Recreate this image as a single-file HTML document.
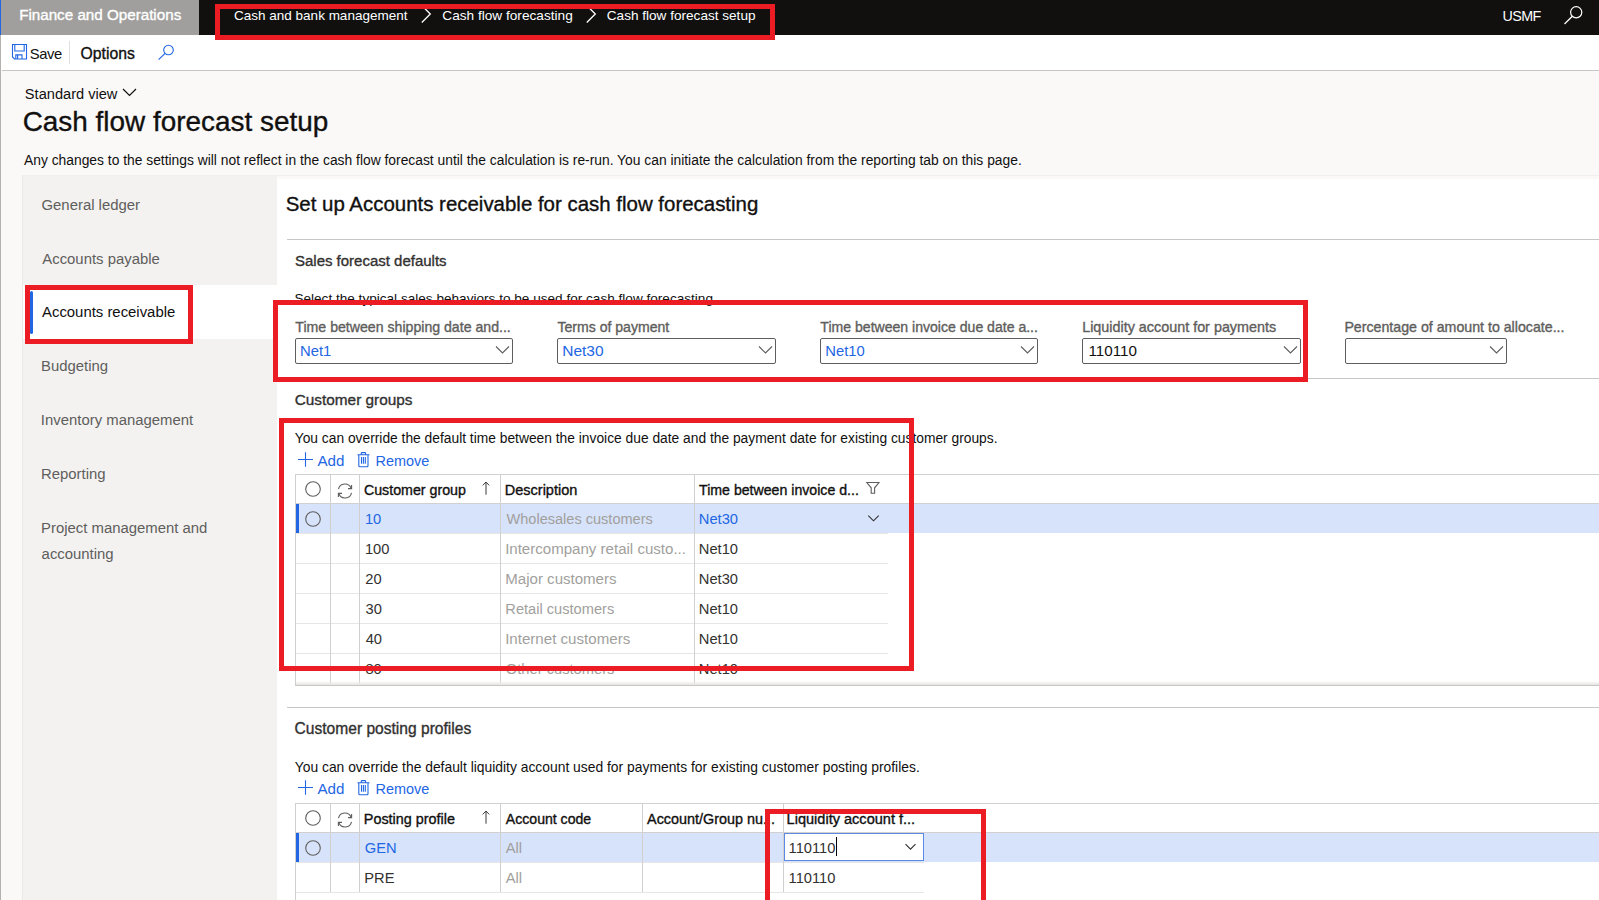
<!DOCTYPE html>
<html><head><meta charset="utf-8">
<style>
*{margin:0;padding:0;box-sizing:border-box}
html,body{width:1599px;height:900px;overflow:hidden;background:#faf9f8;font-family:"Liberation Sans",sans-serif;color:#323130}
.a{position:absolute;white-space:nowrap;line-height:1;display:block}
</style></head><body>
<div class="a" style="left:0px;top:0px;width:1599px;height:35px;background:#11100f"></div>
<div class="a" style="left:0px;top:0px;width:199px;height:35px;background:#a19f9d"></div>
<div class="a" style="left:0px;top:0px;width:1px;height:35px;background:#2266e3"></div>
<div class="a" style="left:19.13px;top:7px;font-size:15.2px;color:#ffffff;-webkit-text-stroke:0.35px #ffffff">Finance and Operations</div>
<div class="a" style="left:234.07px;top:9px;font-size:13.51px;color:#ffffff">Cash and bank management</div>
<div class="a" style="left:442.32px;top:9px;font-size:13.65px;color:#ffffff">Cash flow forecasting</div>
<div class="a" style="left:606.82px;top:9px;font-size:13.58px;color:#ffffff">Cash flow forecast setup</div>
<svg class="a" style="left:416px;top:0px" width="20" height="30" viewBox="0 0 20 30"><path d="M5.8 5.5 L14.3 14 L5.8 22.5" fill="none" stroke="#fff" stroke-width="1.3"/></svg>
<svg class="a" style="left:581px;top:0px" width="20" height="30" viewBox="0 0 20 30"><path d="M5.8 5.5 L14.3 14 L5.8 22.5" fill="none" stroke="#fff" stroke-width="1.3"/></svg>
<div class="a" style="left:1502.53px;top:9px;font-size:14.3px;color:#ffffff;letter-spacing:-0.6px">USMF</div>
<svg class="a" style="left:1560px;top:4px" width="30" height="24" viewBox="0 0 30 24"><circle cx="16.2" cy="8.3" r="5.6" fill="none" stroke="#fff" stroke-width="1.2"/><path d="M12.3 12.3 L4.5 20" stroke="#fff" stroke-width="1.3"/></svg>
<div class="a" style="left:1px;top:35px;width:1598px;height:35px;background:#ffffff"></div>
<div class="a" style="left:2px;top:70px;width:1597px;height:1px;background:#c8c6c4"></div>
<div class="a" style="left:0px;top:35px;width:1px;height:865px;background:#b3b0ad"></div>
<svg class="a" style="left:11px;top:43px" width="18" height="18" viewBox="0 0 18 18"><path d="M1.5 1.5 H15.5 V16 H3.5 L1.5 14 Z M3.8 1.5 V8 H13.2 V1.5 M4.8 16 V11.9 H11 V16 M6.6 12.5 V16" fill="none" stroke="#2266e3" stroke-width="1.1"/></svg>
<div class="a" style="left:29.73px;top:47px;font-size:14.8px;color:#11100f;letter-spacing:-0.4px">Save</div>
<div class="a" style="left:69px;top:41px;width:1px;height:23px;background:#e1dfdd"></div>
<div class="a" style="left:80.54px;top:46px;font-size:15.78px;color:#11100f;-webkit-text-stroke:0.35px #11100f">Options</div>
<svg class="a" style="left:157px;top:43px" width="20" height="18" viewBox="0 0 20 18"><circle cx="11.5" cy="7" r="4.8" fill="none" stroke="#2266e3" stroke-width="1.1"/><path d="M8.1 10.4 L1.6 16.6" stroke="#2266e3" stroke-width="1.2"/></svg>
<div class="a" style="left:1px;top:71px;width:1598px;height:829px;background:#faf9f8"></div>
<div class="a" style="left:24.84px;top:87px;font-size:14.61px;color:#11100f">Standard view</div>
<svg class="a" style="left:121px;top:86px" width="18" height="12" viewBox="0 0 18 12"><path d="M2 3 L8.5 9.5 L15 3" fill="none" stroke="#11100f" stroke-width="1.2"/></svg>
<div class="a" style="left:22.70px;top:108px;font-size:27.92px;color:#11100f;-webkit-text-stroke:0.35px #11100f">Cash flow forecast setup</div>
<div class="a" style="left:24.00px;top:154px;font-size:13.84px;color:#11100f">Any changes to the settings will not reflect in the cash flow forecast until the calculation is re-run. You can initiate the calculation from the reporting tab on this page.</div>
<div class="a" style="left:22px;top:175px;width:1px;height:725px;background:#ebe9e7"></div>
<div class="a" style="left:23px;top:175px;width:1576px;height:1px;background:#f1f0ef"></div>
<div class="a" style="left:23px;top:176px;width:254px;height:724px;background:#f3f2f1"></div>
<div class="a" style="left:277px;top:179px;width:1322px;height:721px;background:#ffffff"></div>
<div class="a" style="left:23px;top:285px;width:254px;height:54px;background:#ffffff"></div>
<div class="a" style="left:30px;top:291px;width:3px;height:43px;background:#2266e3;border-radius:1.5px"></div>
<div class="a" style="left:41.51px;top:198px;font-size:14.9px;color:#605e5c">General ledger</div>
<div class="a" style="left:42.25px;top:252px;font-size:14.9px;color:#605e5c">Accounts payable</div>
<div class="a" style="left:42.00px;top:305px;font-size:14.9px;color:#11100f">Accounts receivable</div>
<div class="a" style="left:41.01px;top:359px;font-size:14.9px;color:#605e5c">Budgeting</div>
<div class="a" style="left:40.86px;top:413px;font-size:14.9px;color:#605e5c">Inventory management</div>
<div class="a" style="left:41.01px;top:467px;font-size:14.9px;color:#605e5c">Reporting</div>
<div class="a" style="left:41.01px;top:521px;font-size:14.9px;color:#605e5c">Project management and</div>
<div class="a" style="left:41.60px;top:547px;font-size:14.9px;color:#605e5c">accounting</div>
<div class="a" style="left:285.73px;top:194px;font-size:20.46px;color:#11100f;-webkit-text-stroke:0.35px #11100f">Set up Accounts receivable for cash flow forecasting</div>
<div class="a" style="left:287px;top:239px;width:1312px;height:1px;background:#c8c6c4"></div>
<div class="a" style="left:294.98px;top:253px;font-size:14.99px;color:#323130;-webkit-text-stroke:0.35px #323130">Sales forecast defaults</div>
<div class="a" style="left:294.39px;top:292px;font-size:13.6px;color:#11100f">Select the typical sales behaviors to be used for cash flow forecasting.</div>
<div class="a" style="left:295.37px;top:320px;font-size:14.14px;color:#605e5c;-webkit-text-stroke:0.35px #605e5c">Time between shipping date and...</div>
<div class="a" style="left:557.47px;top:320px;font-size:14.07px;color:#605e5c;-webkit-text-stroke:0.35px #605e5c">Terms of payment</div>
<div class="a" style="left:820.37px;top:320px;font-size:14.07px;color:#605e5c;-webkit-text-stroke:0.35px #605e5c">Time between invoice due date a...</div>
<div class="a" style="left:1082.20px;top:320px;font-size:14.37px;color:#605e5c;-webkit-text-stroke:0.35px #605e5c">Liquidity account for payments</div>
<div class="a" style="left:1344.41px;top:320px;font-size:14.2px;color:#605e5c;-webkit-text-stroke:0.35px #605e5c">Percentage of amount to allocate...</div>
<div class="a" style="left:295px;top:338px;width:218px;height:26px;border:1px solid #605e5c;border-radius:2px;background:#fff"></div>
<svg class="a" style="left:495px;top:345px" width="15" height="10" viewBox="0 0 15 10"><path d="M1 1.5 L7.5 8 L14 1.5" fill="none" stroke="#605e5c" stroke-width="1.1"/></svg>
<div class="a" style="left:557px;top:338px;width:219px;height:26px;border:1px solid #605e5c;border-radius:2px;background:#fff"></div>
<svg class="a" style="left:758px;top:345px" width="15" height="10" viewBox="0 0 15 10"><path d="M1 1.5 L7.5 8 L14 1.5" fill="none" stroke="#605e5c" stroke-width="1.1"/></svg>
<div class="a" style="left:820px;top:338px;width:218px;height:26px;border:1px solid #605e5c;border-radius:2px;background:#fff"></div>
<svg class="a" style="left:1020px;top:345px" width="15" height="10" viewBox="0 0 15 10"><path d="M1 1.5 L7.5 8 L14 1.5" fill="none" stroke="#605e5c" stroke-width="1.1"/></svg>
<div class="a" style="left:1082px;top:338px;width:219px;height:26px;border:1px solid #605e5c;border-radius:2px;background:#fff"></div>
<svg class="a" style="left:1283px;top:345px" width="15" height="10" viewBox="0 0 15 10"><path d="M1 1.5 L7.5 8 L14 1.5" fill="none" stroke="#605e5c" stroke-width="1.1"/></svg>
<div class="a" style="left:1345px;top:338px;width:162px;height:26px;border:1px solid #605e5c;border-radius:2px;background:#fff"></div>
<svg class="a" style="left:1489px;top:345px" width="15" height="10" viewBox="0 0 15 10"><path d="M1 1.5 L7.5 8 L14 1.5" fill="none" stroke="#605e5c" stroke-width="1.1"/></svg>
<div class="a" style="left:300.02px;top:344px;font-size:14.8px;color:#2266e3">Net1</div>
<div class="a" style="left:562.26px;top:343px;font-size:15.49px;color:#2266e3">Net30</div>
<div class="a" style="left:825.22px;top:344px;font-size:14.8px;color:#2266e3">Net10</div>
<div class="a" style="left:1088.46px;top:343px;font-size:15.19px;color:#11100f">110110</div>
<div class="a" style="left:287px;top:378px;width:1312px;height:1px;background:#c8c6c4"></div>
<div class="a" style="left:294.68px;top:392px;font-size:15.36px;color:#323130;-webkit-text-stroke:0.35px #323130">Customer groups</div>
<div class="a" style="left:294.72px;top:432px;font-size:13.81px;color:#11100f">You can override the default time between the invoice due date and the payment date for existing customer groups.</div>
<svg class="a" style="left:297px;top:452px" width="17" height="17" viewBox="0 0 17 17"><path d="M1 7.5 H16 M8.5 0.3 V14.8" stroke="#2266e3" stroke-width="1.1"/></svg>
<div class="a" style="left:317.50px;top:453px;font-size:15.12px;color:#2266e3">Add</div>
<svg class="a" style="left:356px;top:452px" width="15" height="17" viewBox="0 0 15 17"><path d="M1.5 2.8 H13.5 M5.3 2.8 V1.2 Q5.3 0.6 6 0.6 H8.9 Q9.6 0.6 9.6 1.2 V2.8 M2.8 2.8 V13.8 Q2.8 14.8 3.8 14.8 H11 Q12 14.8 12 13.8 V2.8 M5.5 5 V11.8 M7.4 5 V11.8 M9.3 5 V11.8" fill="none" stroke="#2266e3" stroke-width="1.1"/></svg>
<div class="a" style="left:375.44px;top:454px;font-size:14.48px;color:#2266e3">Remove</div>
<div class="a" style="left:295px;top:474px;width:1304px;height:1px;background:#d2d0ce"></div>
<div class="a" style="left:295px;top:503px;width:1304px;height:1px;background:#d2d0ce"></div>
<div class="a" style="left:296px;top:504px;width:1303px;height:29px;background:#d7e3fa"></div>
<div class="a" style="left:296px;top:504px;width:3px;height:29px;background:#2266e3"></div>
<div class="a" style="left:295px;top:533px;width:593px;height:1px;background:#e8e6e4"></div>
<div class="a" style="left:295px;top:563px;width:593px;height:1px;background:#e8e6e4"></div>
<div class="a" style="left:295px;top:593px;width:593px;height:1px;background:#e8e6e4"></div>
<div class="a" style="left:295px;top:623px;width:593px;height:1px;background:#e8e6e4"></div>
<div class="a" style="left:295px;top:653px;width:593px;height:1px;background:#e8e6e4"></div>
<div class="a" style="left:330px;top:474px;width:1px;height:210px;background:#d2d0ce"></div>
<div class="a" style="left:359px;top:474px;width:1px;height:210px;background:#d2d0ce"></div>
<div class="a" style="left:500px;top:474px;width:1px;height:210px;background:#d2d0ce"></div>
<div class="a" style="left:694px;top:474px;width:1px;height:210px;background:#d2d0ce"></div>
<div class="a" style="left:295px;top:474px;width:1px;height:211px;background:#d2d0ce"></div>
<svg class="a" style="left:303px;top:479px" width="20" height="20" viewBox="0 0 20 20"><circle cx="10" cy="10" r="7.3" fill="none" stroke="#605e5c" stroke-width="1.1"/></svg>
<svg class="a" style="left:335px;top:480.5px" width="20" height="20" viewBox="0 0 20 20"><path d="M3.5 8.2 A6.6 6.6 0 0 1 16.1 7.2 M16.5 11.8 A6.6 6.6 0 0 1 3.9 12.8" fill="none" stroke="#605e5c" stroke-width="1.1"/><path d="M16.6 4 V7.6 H13 M3.4 16 V12.4 H7" fill="none" stroke="#605e5c" stroke-width="1.1"/></svg>
<svg class="a" style="left:303px;top:509px" width="20" height="20" viewBox="0 0 20 20"><circle cx="10" cy="10" r="7.3" fill="none" stroke="#605e5c" stroke-width="1.1"/></svg>
<div class="a" style="left:363.94px;top:483px;font-size:14.22px;color:#11100f;-webkit-text-stroke:0.35px #11100f">Customer group</div>
<svg class="a" style="left:479.6px;top:481px" width="12" height="16" viewBox="0 0 12 16"><path d="M6 1 V13.7 M2.8 4.4 L6 1 L9.2 4.4" fill="none" stroke="#3b3a39" stroke-width="1"/></svg>
<div class="a" style="left:504.79px;top:483px;font-size:14.51px;color:#11100f;-webkit-text-stroke:0.35px #11100f">Description</div>
<div class="a" style="left:699.07px;top:483px;font-size:14.15px;color:#11100f;-webkit-text-stroke:0.35px #11100f">Time between invoice d...</div>
<svg class="a" style="left:864px;top:480px" width="17" height="16" viewBox="0 0 17 16"><path d="M2.8 2.5 H15 L10.6 7.8 V13.3 H7.2 V7.8 Z" fill="none" stroke="#605e5c" stroke-width="1.1"/></svg>
<div class="a" style="left:364.90px;top:512px;font-size:14.7px;color:#2266e3">10</div>
<div class="a" style="left:506.50px;top:512px;font-size:14.55px;color:#a19f9d">Wholesales customers</div>
<div class="a" style="left:698.82px;top:512px;font-size:14.7px;color:#2266e3">Net30</div>
<div class="a" style="left:364.90px;top:542px;font-size:14.7px;color:#323130">100</div>
<div class="a" style="left:505.14px;top:541px;font-size:15.07px;color:#a19f9d">Intercompany retail custo...</div>
<div class="a" style="left:698.82px;top:542px;font-size:14.7px;color:#323130">Net10</div>
<div class="a" style="left:365.26px;top:572px;font-size:14.7px;color:#323130">20</div>
<div class="a" style="left:505.30px;top:571px;font-size:15.05px;color:#a19f9d">Major customers</div>
<div class="a" style="left:698.82px;top:572px;font-size:14.7px;color:#323130">Net30</div>
<div class="a" style="left:365.49px;top:602px;font-size:14.7px;color:#323130">30</div>
<div class="a" style="left:505.33px;top:602px;font-size:14.64px;color:#a19f9d">Retail customers</div>
<div class="a" style="left:698.82px;top:602px;font-size:14.7px;color:#323130">Net10</div>
<div class="a" style="left:365.71px;top:632px;font-size:14.7px;color:#323130">40</div>
<div class="a" style="left:505.14px;top:631px;font-size:15.12px;color:#a19f9d">Internet customers</div>
<div class="a" style="left:698.82px;top:632px;font-size:14.7px;color:#323130">Net10</div>
<div class="a" style="left:365.41px;top:662px;font-size:14.7px;color:#323130">80</div>
<div class="a" style="left:505.84px;top:662px;font-size:14.7px;color:#a19f9d">Other customers</div>
<div class="a" style="left:698.82px;top:662px;font-size:14.7px;color:#323130">Net10</div>
<svg class="a" style="left:867px;top:514px" width="14" height="9" viewBox="0 0 14 9"><path d="M1.3 1.6 L6.5 6.8 L11.7 1.6" fill="none" stroke="#323130" stroke-width="1.1"/></svg>
<div class="a" style="left:296px;top:681px;width:1303px;height:4px;background:linear-gradient(rgba(255,255,255,0.2),#e6e4e2)"></div>
<div class="a" style="left:295px;top:685px;width:1304px;height:1px;background:#c8c6c4"></div>
<div class="a" style="left:287px;top:707px;width:1312px;height:1px;background:#c8c6c4"></div>
<div class="a" style="left:294.57px;top:721px;font-size:15.58px;color:#323130;-webkit-text-stroke:0.35px #323130">Customer posting profiles</div>
<div class="a" style="left:294.72px;top:761px;font-size:13.86px;color:#11100f">You can override the default liquidity account used for payments for existing customer posting profiles.</div>
<svg class="a" style="left:297px;top:780px" width="17" height="17" viewBox="0 0 17 17"><path d="M1 7.5 H16 M8.5 0.3 V14.8" stroke="#2266e3" stroke-width="1.1"/></svg>
<div class="a" style="left:317.50px;top:781px;font-size:15.12px;color:#2266e3">Add</div>
<svg class="a" style="left:356px;top:780px" width="15" height="17" viewBox="0 0 15 17"><path d="M1.5 2.8 H13.5 M5.3 2.8 V1.2 Q5.3 0.6 6 0.6 H8.9 Q9.6 0.6 9.6 1.2 V2.8 M2.8 2.8 V13.8 Q2.8 14.8 3.8 14.8 H11 Q12 14.8 12 13.8 V2.8 M5.5 5 V11.8 M7.4 5 V11.8 M9.3 5 V11.8" fill="none" stroke="#2266e3" stroke-width="1.1"/></svg>
<div class="a" style="left:375.44px;top:782px;font-size:14.48px;color:#2266e3">Remove</div>
<div class="a" style="left:295px;top:803px;width:1304px;height:1px;background:#d2d0ce"></div>
<div class="a" style="left:295px;top:832px;width:1304px;height:1px;background:#d2d0ce"></div>
<div class="a" style="left:296px;top:833px;width:1303px;height:29px;background:#d7e3fa"></div>
<div class="a" style="left:296px;top:833px;width:3px;height:29px;background:#2266e3"></div>
<div class="a" style="left:295px;top:862px;width:629px;height:1px;background:#e8e6e4"></div>
<div class="a" style="left:295px;top:892px;width:629px;height:1px;background:#e8e6e4"></div>
<div class="a" style="left:295px;top:803px;width:1px;height:97px;background:#d2d0ce"></div>
<div class="a" style="left:330px;top:803px;width:1px;height:89px;background:#d2d0ce"></div>
<div class="a" style="left:359px;top:803px;width:1px;height:89px;background:#d2d0ce"></div>
<div class="a" style="left:500px;top:803px;width:1px;height:89px;background:#d2d0ce"></div>
<div class="a" style="left:642px;top:803px;width:1px;height:89px;background:#d2d0ce"></div>
<div class="a" style="left:783px;top:803px;width:1px;height:89px;background:#d2d0ce"></div>
<svg class="a" style="left:303px;top:808px" width="20" height="20" viewBox="0 0 20 20"><circle cx="10" cy="10" r="7.3" fill="none" stroke="#605e5c" stroke-width="1.1"/></svg>
<svg class="a" style="left:335px;top:809.5px" width="20" height="20" viewBox="0 0 20 20"><path d="M3.5 8.2 A6.6 6.6 0 0 1 16.1 7.2 M16.5 11.8 A6.6 6.6 0 0 1 3.9 12.8" fill="none" stroke="#605e5c" stroke-width="1.1"/><path d="M16.6 4 V7.6 H13 M3.4 16 V12.4 H7" fill="none" stroke="#605e5c" stroke-width="1.1"/></svg>
<svg class="a" style="left:303px;top:838px" width="20" height="20" viewBox="0 0 20 20"><circle cx="10" cy="10" r="7.3" fill="none" stroke="#605e5c" stroke-width="1.1"/></svg>
<div class="a" style="left:363.80px;top:812px;font-size:14.38px;color:#11100f;-webkit-text-stroke:0.35px #11100f">Posting profile</div>
<svg class="a" style="left:479.6px;top:810px" width="12" height="16" viewBox="0 0 12 16"><path d="M6 1 V13.7 M2.8 4.4 L6 1 L9.2 4.4" fill="none" stroke="#3b3a39" stroke-width="1"/></svg>
<div class="a" style="left:505.85px;top:812px;font-size:14.09px;color:#11100f;-webkit-text-stroke:0.35px #11100f">Account code</div>
<div class="a" style="left:647.05px;top:812px;font-size:14.38px;color:#11100f;-webkit-text-stroke:0.35px #11100f">Account/Group nu...</div>
<div class="a" style="left:786.59px;top:812px;font-size:14.56px;color:#11100f;-webkit-text-stroke:0.35px #11100f">Liquidity account f...</div>
<div class="a" style="left:364.76px;top:841px;font-size:14.7px;color:#2266e3">GEN</div>
<div class="a" style="left:505.80px;top:841px;font-size:14.7px;color:#a19f9d">All</div>
<div class="a" style="left:364.32px;top:871px;font-size:14.7px;color:#323130">PRE</div>
<div class="a" style="left:505.80px;top:871px;font-size:14.7px;color:#a19f9d">All</div>
<div class="a" style="left:784px;top:833px;width:140px;height:28px;background:#fff;border:1px solid #5b8ae6"></div>
<div class="a" style="left:788.60px;top:841px;font-size:14.7px;color:#323130">110110</div>
<div class="a" style="left:836px;top:837px;width:1px;height:19px;background:#000"></div>
<svg class="a" style="left:904px;top:843px" width="13" height="8" viewBox="0 0 13 8"><path d="M1.5 1.2 L6.5 6.2 L11.5 1.2" fill="none" stroke="#323130" stroke-width="1.1"/></svg>
<div class="a" style="left:788.60px;top:871px;font-size:14.7px;color:#323130">110110</div>
<div class="a" style="left:215px;top:4px;width:560px;height:36px;border:5px solid #ec1c24"></div>
<div class="a" style="left:25px;top:285px;width:168px;height:59px;border:5px solid #ec1c24"></div>
<div class="a" style="left:273px;top:300px;width:1035px;height:82px;border:5px solid #ec1c24"></div>
<div class="a" style="left:279px;top:418px;width:635px;height:253px;border:5px solid #ec1c24"></div>
<div class="a" style="left:765px;top:809px;width:221px;height:101px;border:5px solid #ec1c24"></div>
</body></html>
